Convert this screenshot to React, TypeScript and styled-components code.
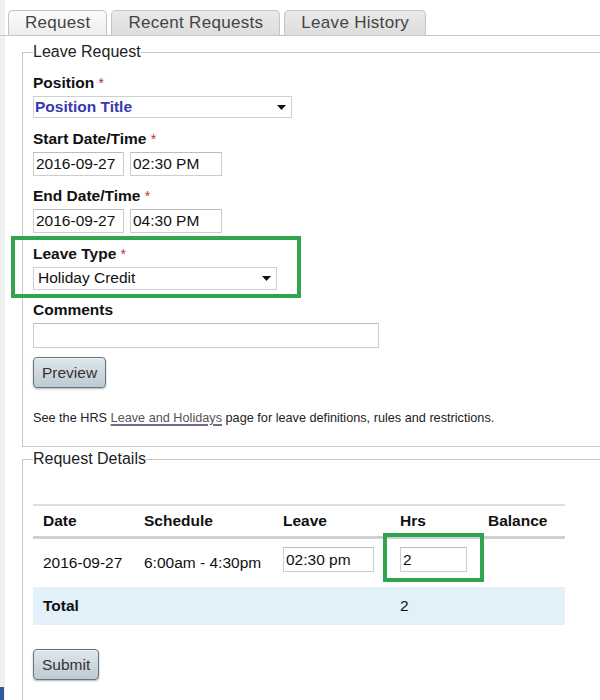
import React from "react";
import styled, { createGlobalStyle, css } from "styled-components";

const FONT = `"Liberation Sans", Arial, sans-serif`;
const GREEN = "#2fa54d";

const GlobalStyle = createGlobalStyle`
  html, body { margin: 0; padding: 0; }
  body {
    width: 600px;
    min-height: 700px;
    overflow: hidden;
    font-family: ${FONT};
    color: #111;
    background:
      linear-gradient(#2c5a9c, #2c5a9c) 0 687px / 4px 13px no-repeat,
      linear-gradient(to right, #eef0f1 0, #eef0f1 5px, #ffffff 5px) 0 0 / 100% 100% no-repeat;
  }
`;

const Page = styled.div`
  padding-top: 10px;
`;

const TabBar = styled.div`
  display: flex;
  gap: 4px;
  padding-left: 8px;
  border-bottom: 1px solid #c6c6c6;
`;

const Tab = styled.div<{ $active?: boolean }>`
  box-sizing: border-box;
  height: 25px;
  padding: 0 16px;
  line-height: 24px;
  font-size: 17px;
  letter-spacing: 0.3px;
  color: #444;
  border: 1px solid #c4c4c4;
  border-bottom: none;
  border-radius: 5px 5px 0 0;
  background: ${(p) =>
    p.$active
      ? "linear-gradient(#fbfbfb, #ededed)"
      : "linear-gradient(#e9e9e9, #dddddd)"};
`;

const Main = styled.div`
  padding-left: 20px;
`;

const Fieldset = styled.fieldset<{ $mt: number; $pt: number }>`
  margin: ${(p) => p.$mt}px 0 0 2px;
  padding: ${(p) => p.$pt}px 20px 20px 10px;
  border: 1px solid #c8c8c8;
  border-right: none;
  min-width: 0;
`;

const Legend = styled.legend`
  padding: 0;
  font-size: 16px;
  line-height: 18px;
  color: #222;
`;

const Form = styled.div`
  display: flex;
  flex-direction: column;
  align-items: flex-start;
  gap: 10.5px;
`;

const highlightBox = css`
  &::after {
    content: "";
    position: absolute;
    left: -22px;
    top: -8px;
    right: -24px;
    bottom: -8.5px;
    border: 4px solid ${GREEN};
    pointer-events: none;
  }
`;

const Field = styled.div<{ $highlight?: boolean }>`
  position: relative;
  display: flex;
  flex-direction: column;
  align-items: flex-start;
  gap: 3px;
  ${(p) => p.$highlight && highlightBox}
`;

const Label = styled.div`
  font-size: 15.5px;
  font-weight: bold;
  line-height: 20px;
  color: #111;
`;

const Req = styled.span`
  color: #b83030;
  font-weight: normal;
  font-size: 14px;
`;

const SelectBox = styled.div<{ $w: number; $h: number; $pl: number; $blue?: boolean }>`
  box-sizing: border-box;
  width: ${(p) => p.$w}px;
  height: ${(p) => p.$h}px;
  display: flex;
  align-items: center;
  justify-content: space-between;
  padding: 0 5px 0 ${(p) => p.$pl}px;
  border: 1px solid #d0d0d0;
  background: #fff;
  font-size: 15.5px;
  color: ${(p) => (p.$blue ? "#3838b2" : "#111")};
  font-weight: ${(p) => (p.$blue ? "bold" : "normal")};
`;

const InputRow = styled.div`
  display: flex;
  gap: 6px;
`;

const TextInput = styled.input<{ $w: number; $h: number }>`
  box-sizing: border-box;
  display: block;
  width: ${(p) => p.$w}px;
  height: ${(p) => p.$h}px;
  margin: 0;
  padding: 0 2px;
  border: 1px solid #cdcdcd;
  border-top-color: #bdbdbd;
  background: #fff;
  font-family: ${FONT};
  font-size: 15.5px;
  color: #111;
  outline: none;
`;

const Button = styled.button<{ $mt: number }>`
  display: block;
  box-sizing: border-box;
  height: 31px;
  margin: ${(p) => p.$mt}px 0 0;
  padding: 0 8px;
  font-family: ${FONT};
  font-size: 15.5px;
  color: #333;
  border: 1px solid #5f7480;
  border-radius: 4px;
  background: linear-gradient(#dfe7eb, #bccad2);
  box-shadow: 0 1px 2px rgba(0, 0, 0, 0.3), inset 0 1px 0 rgba(255, 255, 255, 0.6);
`;

const Note = styled.p`
  margin: 22px 0 0;
  font-size: 12.7px;
  line-height: 16px;
  color: #222;
`;

const Link = styled.a`
  color: #555;
  text-decoration: underline;
  text-decoration-color: #76688a;
  text-decoration-thickness: 2px;
  text-underline-offset: 2px;
`;

const Table = styled.table`
  width: 532px;
  table-layout: fixed;
  border-collapse: separate;
  border-spacing: 0;
  font-size: 15.5px;
  color: #111;
`;

const Th = styled.th`
  text-align: left;
  font-weight: bold;
  padding: 6px 10px;
  line-height: 18px;
  border-top: 2px solid #dedede;
  border-bottom: 3px solid #cfcfcf;
`;

const Tr = styled.tr<{ $h: number; $bg?: string }>`
  height: ${(p) => p.$h}px;
  background: ${(p) => p.$bg || "transparent"};
`;

const Td = styled.td<{ $top?: boolean; $bold?: boolean }>`
  padding: ${(p) => (p.$top ? "8px 10px 0" : "0 10px")};
  vertical-align: ${(p) => (p.$top ? "top" : "middle")};
  font-weight: ${(p) => (p.$bold ? "bold" : "normal")};
  white-space: nowrap;
`;

const HrsMark = styled.div`
  position: relative;
  width: fit-content;
  &::after {
    content: "";
    position: absolute;
    left: -17px;
    top: -14px;
    right: -17px;
    bottom: -10px;
    border: 4px solid ${GREEN};
    pointer-events: none;
  }
`;

const Caret = () => (
  <svg width="9" height="5" viewBox="0 0 9 5" aria-hidden="true">
    <path d="M0 0H9L4.5 5Z" fill="#111" />
  </svg>
);

const columns = [101, 139, 117, 88, 87];

export default function App() {
  return (
    <>
      <GlobalStyle />
      <Page>
        <TabBar>
          <Tab $active>Request</Tab>
          <Tab>Recent Requests</Tab>
          <Tab>Leave History</Tab>
        </TabBar>
        <Main>
          <Fieldset $mt={7} $pt={12}>
            <Legend>Leave Request</Legend>
            <Form>
              <Field>
                <Label>
                  Position <Req>*</Req>
                </Label>
                <SelectBox $w={259} $h={22} $pl={1} $blue>
                  <span>Position Title</span>
                  <Caret />
                </SelectBox>
              </Field>
              <Field>
                <Label>
                  Start Date/Time <Req>*</Req>
                </Label>
                <InputRow>
                  <TextInput $w={91} $h={24} defaultValue="2016-09-27" />
                  <TextInput $w={92} $h={24} defaultValue="02:30 PM" />
                </InputRow>
              </Field>
              <Field>
                <Label>
                  End Date/Time <Req>*</Req>
                </Label>
                <InputRow>
                  <TextInput $w={91} $h={24} defaultValue="2016-09-27" />
                  <TextInput $w={92} $h={24} defaultValue="04:30 PM" />
                </InputRow>
              </Field>
              <Field $highlight>
                <Label>
                  Leave Type <Req>*</Req>
                </Label>
                <SelectBox $w={244} $h={23} $pl={4}>
                  <span>Holiday Credit</span>
                  <Caret />
                </SelectBox>
              </Field>
              <Field>
                <Label>Comments</Label>
                <TextInput $w={346} $h={25} defaultValue="" />
              </Field>
            </Form>
            <Button $mt={9}>Preview</Button>
            <Note>
              See the HRS <Link href="#">Leave and Holidays</Link> page for leave definitions,
              rules and restrictions.
            </Note>
          </Fieldset>

          <Fieldset $mt={3} $pt={36}>
            <Legend>Request Details</Legend>
            <Table>
              <colgroup>
                {columns.map((w, i) => (
                  <col key={i} style={{ width: w }} />
                ))}
              </colgroup>
              <thead>
                <tr>
                  <Th>Date</Th>
                  <Th>Schedule</Th>
                  <Th>Leave</Th>
                  <Th>Hrs</Th>
                  <Th>Balance</Th>
                </tr>
              </thead>
              <tbody>
                <Tr $h={48}>
                  <Td>2016-09-27</Td>
                  <Td>6:00am - 4:30pm</Td>
                  <Td $top>
                    <TextInput $w={91} $h={25} defaultValue="02:30 pm" />
                  </Td>
                  <Td $top>
                    <HrsMark>
                      <TextInput $w={67} $h={25} defaultValue="2" />
                    </HrsMark>
                  </Td>
                  <Td></Td>
                </Tr>
                <Tr $h={38} $bg="#e2f0fa">
                  <Td $bold>Total</Td>
                  <Td></Td>
                  <Td></Td>
                  <Td>2</Td>
                  <Td></Td>
                </Tr>
              </tbody>
            </Table>
            <Button $mt={24}>Submit</Button>
          </Fieldset>
        </Main>
      </Page>
    </>
  );
}
